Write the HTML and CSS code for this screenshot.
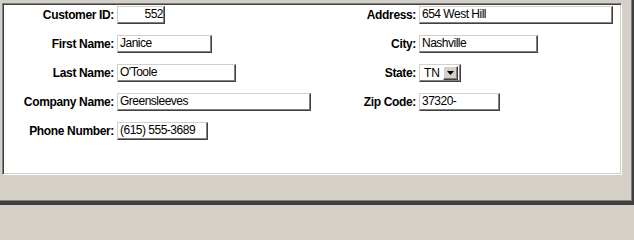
FILE: index.html
```html
<!DOCTYPE html>
<html>
<head>
<meta charset="utf-8">
<link rel="stylesheet" href="styles.css">
</head>
<body>
<div class="window">
  <div class="panel">
    <div class="form">
      <div class="label">Customer ID:</div>
      <div class="field w48 right">552</div>
      <div class="label">Address:</div>
      <div class="field w194">654 West Hill</div>

      <div class="label">First Name:</div>
      <div class="field w95">Janice</div>
      <div class="label">City:</div>
      <div class="field w119">Nashville</div>

      <div class="label">Last Name:</div>
      <div class="field w119">O'Toole</div>
      <div class="label">State:</div>
      <div class="field w42 combo"><span class="combo-text">TN</span><span class="drop"><svg width="7" height="4" viewBox="0 0 7 4"><polygon points="0,0 7,0 3.5,4" fill="#000"/></svg></span></div>

      <div class="label">Company Name:</div>
      <div class="field w194">Greensleeves</div>
      <div class="label">Zip Code:</div>
      <div class="field w81">37320-</div>

      <div class="label">Phone Number:</div>
      <div class="field w91">(615) 555-3689</div>
    </div>
  </div>
</div>
</body>
</html>
```

FILE: styles.css
```css
html, body {
  margin: 0;
  padding: 0;
}

html {
  background: #d4d0c8;
}

body {
  width: 634px;
  height: 205px;
  overflow: hidden;
  background: #d4d0c8;
  font-family: "Liberation Sans", Arial, sans-serif;
  color: #000;
}

.window {
  box-sizing: border-box;
  width: 634px;
  height: 205px;
  padding: 3px 0 0 2px;
  border-right: 2px solid #404040;
  border-bottom: 4px solid #404040;
  box-shadow: inset -1px -1px 0 #808080;
}

.panel {
  box-sizing: border-box;
  width: 620px;
  height: 172px;
  background: #fff;
  border: 1px solid;
  border-color: #808080 #fff #fff #808080;
  box-shadow: inset 1px 1px 0 #404040, inset -1px -1px 0 #d4d0c8;
}

.form {
  display: grid;
  grid-template-columns: 114px 195px 107px 1fr;
  grid-auto-rows: 18px;
  row-gap: 11px;
  padding-top: 2px;
}

.label {
  font-size: 12px;
  font-weight: bold;
  line-height: 18px;
  letter-spacing: -0.35px;
  text-align: right;
  padding-right: 3px;
  white-space: nowrap;
}

.field {
  box-sizing: border-box;
  height: 18px;
  justify-self: start;
  background: #fff;
  border: 1px solid;
  border-color: #d4d0c8 #404040 #404040 #d4d0c8;
  box-shadow: inset -1px -1px 0 #808080;
  padding: 0 2px;
  font-size: 12px;
  line-height: 15px;
  letter-spacing: -0.5px;
  white-space: nowrap;
  overflow: hidden;
}

.right { text-align: right; padding-right: 1px; }

.w42 { width: 42px; }
.w48 { width: 48px; }
.w81 { width: 81px; }
.w91 { width: 91px; }
.w95 { width: 95px; }
.w119 { width: 119px; }
.w194 { width: 194px; }

.combo {
  display: flex;
  align-items: center;
  justify-content: space-between;
  padding: 0 2px 0 4px;
}

.combo-text {
  letter-spacing: 0;
}

.drop {
  box-sizing: border-box;
  width: 15px;
  height: 14px;
  display: flex;
  align-items: center;
  justify-content: center;
  background: #d4d0c8;
  border: 1px solid;
  border-color: #fff #404040 #404040 #fff;
  box-shadow: inset -1px -1px 0 #808080;
}

.drop svg { display: block; margin: 0 1px 0 0; }
```
